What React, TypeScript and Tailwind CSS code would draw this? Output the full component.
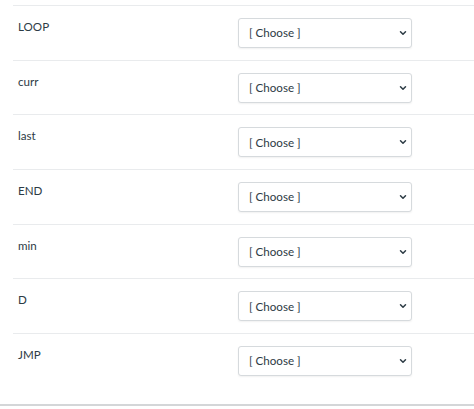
const ROWS = ['LOOP', 'curr', 'last', 'END', 'min', 'D', 'JMP'];

function Chevron() {
    return (
        <svg width="8" height="8" viewBox="0 0 8 8" className="pointer-events-none absolute right-[4px] top-1/2 -translate-y-1/2">
            <path d="M1.5 2.8 L4 5.3 L6.5 2.8" fill="none" stroke="#2d3b45" strokeWidth="1.5" strokeLinecap="round" strokeLinejoin="round" />
        </svg>
    );
}

function ChooseSelect() {
    return (
        <div className="relative h-[30px] w-[174px] rounded-[3px] border border-[#d6dadd] bg-white shadow-[0_1px_2px_rgba(0,0,0,0.06)]">
            <div className="flex h-full items-center pl-[10px] text-[11.6px] text-[#2d3b45]">[ Choose ]</div>
            <Chevron />
        </div>
    );
}

export default function App() {
    return (
        <div className="h-[409px] w-[474px] overflow-hidden bg-white font-['Lato','Liberation_Sans',sans-serif]">
            <div className="h-[5px]" />
            <div className="ml-[13px]">
                {ROWS.map((name) => (
                    <div key={name} className="flex h-[54.7px] border-t border-[#e9ebed]">
                        <div className="w-[225px] pl-[5px] pt-[13px] text-[11.6px] leading-[16px] text-[#2d3b45]">{name}</div>
                        <div className="pt-[12px]">
                            <ChooseSelect />
                        </div>
                    </div>
                ))}
            </div>
            <div className="mt-[16px] h-[2px] w-full bg-[#d4d6d8]" />
        </div>
    );
}
